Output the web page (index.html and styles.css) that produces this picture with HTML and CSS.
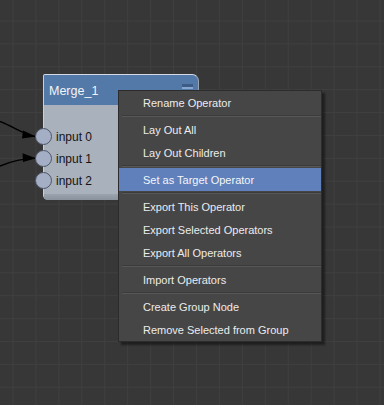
FILE: index.html
```html
<!DOCTYPE html>
<html>
<head>
<meta charset="utf-8">
<link rel="stylesheet" href="styles.css">
</head>
<body>
<div class="canvas">
  <svg class="wires" width="384" height="405" viewBox="0 0 384 405">
    <path d="M0,121.5 C14,127 24,134.5 35,136.5" fill="none" stroke="#000" stroke-width="1.4"/>
    <polygon points="36,136.6 23,130.6 22,138.6" fill="#000"/>
    <path d="M0,166 C12,161 24,158.6 35,158.4" fill="none" stroke="#000" stroke-width="1.4"/>
    <polygon points="36,158.3 22.5,153.2 23,162" fill="#000"/>
  </svg>

  <div class="node">
    <div class="node-head">
      <span class="node-title">Merge_1</span>
      <span class="node-min"></span>
    </div>
    <div class="node-body">
      <div class="port-row"><span class="port"></span><span class="port-label">input 0</span></div>
      <div class="port-row"><span class="port"></span><span class="port-label">input 1</span></div>
      <div class="port-row"><span class="port"></span><span class="port-label">input 2</span></div>
    </div>
    <div class="node-foot"></div>
  </div>

  <div class="menu">
    <div class="item">Rename Operator</div>
    <div class="sep"></div>
    <div class="item">Lay Out All</div>
    <div class="item">Lay Out Children</div>
    <div class="sep"></div>
    <div class="item active">Set as Target Operator</div>
    <div class="sep"></div>
    <div class="item">Export This Operator</div>
    <div class="item">Export Selected Operators</div>
    <div class="item">Export All Operators</div>
    <div class="sep"></div>
    <div class="item">Import Operators</div>
    <div class="sep"></div>
    <div class="item">Create Group Node</div>
    <div class="item">Remove Selected from Group</div>
  </div>
</div>
</body>
</html>
```

FILE: styles.css
```css
html, body {
  margin: 0;
  padding: 0;
}
body {
  width: 384px;
  height: 405px;
  overflow: hidden;
  font-family: "Liberation Sans", Arial, sans-serif;
  background-color: #373737;
  background-image:
    linear-gradient(to right, #3f3f3f 0, #3f3f3f 1px, transparent 1px),
    linear-gradient(to bottom, #3f3f3f 0, #3f3f3f 1px, transparent 1px);
  background-size: 22.95px 22.9px;
  background-position: 12.5px 20.5px;
}
.canvas {
  position: relative;
  width: 384px;
  height: 405px;
}
.wires {
  position: absolute;
  left: 0;
  top: 0;
}
.node {
  position: absolute;
  left: 43px;
  top: 74px;
  width: 156px;
  height: 126px;
  box-sizing: border-box;
  border-top: 1px solid #d4dae4;
  border-left: 1px solid #c8cfda;
  border-right: 1px solid #9aa3b0;
  border-radius: 2px 7px 0 5px;
  background: #a9b1bd;
  display: flex;
  flex-direction: column;
}
.node-head {
  height: 30px;
  flex: none;
  background: #5279a8;
  border-radius: 1px 6px 0 0;
  display: flex;
  align-items: center;
  padding-left: 5px;
  position: relative;
}
.node-title {
  color: #f2f4f8;
  font-size: 12.5px;
  margin-top: 1px;
}
.node-min {
  position: absolute;
  left: 138px;
  top: 9px;
  width: 11px;
  height: 3px;
  background: #3c5c86;
  border-bottom: 2px solid #86a6d0;
}
.node-body {
  flex: 1;
  padding-top: 20.5px;
  display: flex;
  flex-direction: column;
}
.port-row {
  height: 22px;
  display: flex;
  align-items: center;
}
.port {
  width: 15px;
  height: 15px;
  border-radius: 50%;
  background: #a4afc6;
  border: 1px solid #4e5566;
  margin-left: -9px;
  flex: none;
}
.port-label {
  margin-left: 4px;
  font-size: 12px;
  color: #141414;
}
.node-foot {
  height: 6px;
  flex: none;
  background: linear-gradient(to bottom, #9ba3af, #8a929e);
  border-radius: 0 0 0 4px;
}
.menu {
  position: absolute;
  left: 118px;
  top: 90px;
  width: 204px;
  box-sizing: border-box;
  background: #464646;
  border: 1px solid #2c2c2c;
  box-shadow: 3px 3px 2px rgba(0, 0, 0, 0.45);
  display: flex;
  flex-direction: column;
  color: #ececec;
  font-size: 11px;
}
.item {
  height: 22.67px;
  line-height: 24.5px;
  overflow: hidden;
  padding-left: 24px;
  white-space: nowrap;
}
.item.active {
  background: #5f80ba;
  color: #f4f6fa;
}
.sep {
  height: 4.6px;
  margin-left: 3px;
  display: flex;
  flex-direction: column;
  justify-content: center;
}
.sep::before {
  content: "";
  display: block;
  height: 1px;
  background: #3b3b3b;
}
.sep::after {
  content: "";
  display: block;
  height: 1px;
  background: #575757;
}
```
